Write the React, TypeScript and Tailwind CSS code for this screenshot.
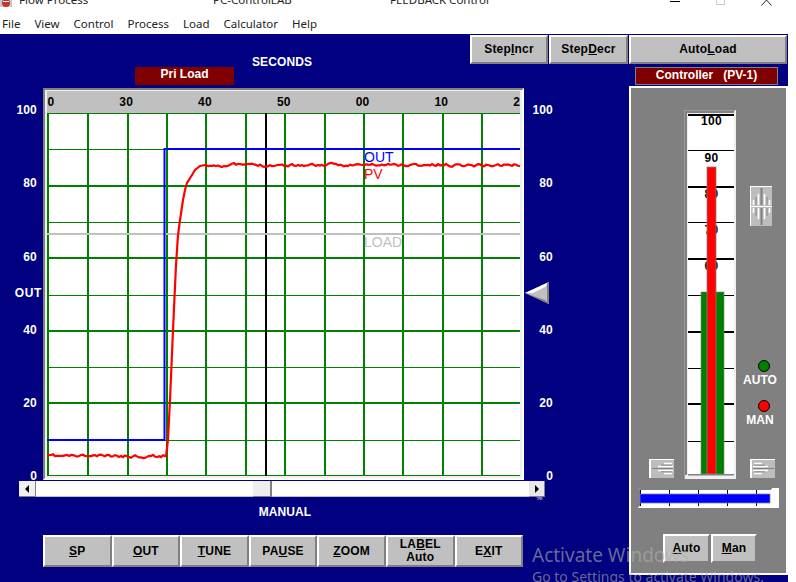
import type { ReactNode } from 'react';

const FONT = { fontFamily: '"Liberation Sans", Arial, sans-serif' };
const MAJOR_X = [48, 88, 128, 167, 206, 246, 285, 325, 364, 403, 443, 482];
const THICK_Y = [186, 258, 331, 403, 476];
const THIN_Y = [149, 222, 295, 367, 440];
const AXIS = ['100', '', '80', '', '60', 'OUT', '40', '', '20', '', '0'];
const SECONDS = ['20', '30', '40', '50', '00', '10', '20'];
const RISE = [[166, 456], [168, 440], [170, 400], [173, 330], [176, 265], [178, 235], [180, 220], [183, 200], [185, 190], [187, 183], [192, 175], [195, 170], [200, 166], [206, 165]];

// fixed noise so the trace looks the same each run
function pvPath() {
  let seed = 11;
  const rnd = () => { seed = (seed * 16807) % 2147483647; return seed / 2147483647 - 0.5; };
  let drift = 0;
  const noisy = (x: number, y: number) => {
    drift = drift * 0.55 + rnd() * 2.6;
    return `${x},${(y + drift).toFixed(1)}`;
  };
  const pts: string[] = [];
  for (let x = 47; x < 166; x += 2) pts.push(noisy(x, 456));
  RISE.forEach(([x, y]) => pts.push(`${x},${y}`));
  for (let x = 208; x <= 520; x += 2) pts.push(noisy(x, 165));
  return 'M' + pts.join('L');
}

function Btn({ children, className }: { children: ReactNode; className: string }) {
  return (
    <div className={`flex flex-col items-center justify-center bg-[#c0c0c0] border-2 border-t-white border-l-white border-r-[#808080] border-b-[#808080] text-[12px] leading-[13px] font-bold tracking-[0.2px] text-black shrink-0 ${className}`}>
      {children}
    </div>
  );
}

function AxisCol({ className, arrow }: { className: string; arrow?: boolean }) {
  return (
    <div className={`grid grid-rows-[repeat(11,36.6px)] h-[402px] mt-[4px] text-white text-[12px] font-bold tracking-[0.2px] shrink-0 ${className}`}>
      {AXIS.map((t, i) => (
        <div key={i} className="flex items-center justify-end">
          {t === 'OUT' && arrow ? (
            <svg width="29" height="24" viewBox="0 0 29 24" className="shrink-0">
              <polygon points="1,12 25,1 25,23" fill="#c0c0c0" />
              <polygon points="1,12 25,1 21,6 9,12" fill="#ffffff" />
              <polygon points="1,12 21,19 25,23" fill="#808080" />
              <polygon points="23,2 25,1 25,23 23,22" fill="#808080" />
            </svg>
          ) : t === 'OUT' ? (
            <span className="-mr-[5px] tracking-[0.6px]">OUT</span>
          ) : t}
        </div>
      ))}
    </div>
  );
}

function HandH({ flip }: { flip?: boolean }) {
  return (
    <div className="w-[25px] h-[19px] bg-[#bdbdbd] border-l-2 border-t border-white shrink-0">
      <svg width="23" height="18" viewBox="0 0 23 18" className={`block ${flip ? '-scale-x-100' : ''}`}>
        <path d="M1 8.5h21" stroke="#808080" />
        <path d="M7 6.5h15M7 10.5h15M13 3.5h8M13 13.5h8" stroke="#fff" strokeWidth="1.4" />
        <path d="M10 5.2h11M10 11.8h11" stroke="#8a8a8a" />
      </svg>
    </div>
  );
}

function HandV({ flip }: { flip?: boolean }) {
  return (
    <svg width="21" height="19" viewBox="0 0 21 19" className={`block bg-[#bdbdbd] ${flip ? '-scale-y-100' : ''}`}>
      <path d="M10.5 1v17" stroke="#808080" strokeWidth="2" />
      <path d="M7.5 7v11M13.5 7v11M2.5 13v5M18.5 13v5" stroke="#fff" strokeWidth="1.6" />
      <path d="M5 10v8M16 10v8" stroke="#8a8a8a" />
    </svg>
  );
}

function Tube() {
  return (
    <svg width="52" height="369" viewBox="684 110 52 369" className="shrink-0" style={FONT}>
      <rect x="684" y="110" width="52" height="369" fill="#f0f0f0" />
      <path d="M684.5 479V110.5H735" stroke="#9a9a9a" fill="none" />
      <path d="M686 475V112H734" stroke="#808080" strokeWidth="2" fill="none" />
      <rect x="688" y="114" width="46" height="361" fill="#fff" />
      <rect x="688" y="114" width="46" height="2" fill="#000" />
      {[['100', 125], ['90', 162], ['80', 198], ['70', 234], ['60', 270]].map(([t, y]) => (
        <text key={t} x="711.5" y={y} textAnchor="middle" fontSize="12" fontWeight="700" letterSpacing="0.3">{t}</text>
      ))}
      {[150, 186, 222, 258, 295, 331, 368, 403, 441].map((y, i) => (
        <rect key={y} x="688" y={y} width="46" height={i % 2 === 1 ? 2 : 1} fill="#000" />
      ))}
      <rect x="701" y="292" width="23" height="182" fill="#008000" stroke="#808080" strokeWidth="0.6" />
      <rect x="707" y="167" width="9" height="307" fill="#ff0000" stroke="#808080" strokeWidth="0.8" />
      <rect x="688" y="474" width="46" height="1.5" fill="#808080" />
    </svg>
  );
}

function ZoomBar() {
  return (
    <svg width="141" height="20" viewBox="638 488 141 20" className="ml-[7px] mt-[9px] shrink-0">
      <rect x="638" y="488" width="141" height="20" fill="#fff" />
      <path d="M638.5 507V488.5H772" stroke="#808080" fill="none" />
      <path d="M639.5 506V489.5H771" stroke="#808080" fill="none" />
      {[640, 669, 698, 727, 756].map(x => (
        <g key={x}>
          <rect x={x} y="490" width="1" height="4" fill="#000" />
          <rect x={x} y="503" width="1" height="3" fill="#000" />
        </g>
      ))}
      <rect x="640" y="494" width="130" height="9" fill="#0000ff" stroke="#808080" strokeWidth="0.8" />
    </svg>
  );
}

export default function App() {
  return (
    <div className="relative flex flex-col w-[796px] h-[582px] overflow-hidden bg-white" style={FONT}>
      {/* title bar, cut off by the capture */}
      <div className="relative h-[13px] shrink-0 overflow-hidden text-[11.5px] leading-[14px] text-[#222] font-['Noto_Sans',sans-serif]">
        <div className="flex -mt-[7px]">
          <svg width="14" height="14" viewBox="0 0 14 14" className="shrink-0">
            <rect x="0" y="3" width="12" height="11" fill="#c9c9c9" />
            <circle cx="6" cy="10" r="4" fill="#c8342c" />
            <rect x="3" y="8" width="6" height="1" fill="#fff" />
          </svg>
          <span className="ml-[5px] w-[194px]">Flow Process</span>
          <span className="w-[177px]">PC-ControlLAB</span>
          <span className="w-[200px]">FEEDBACK Control</span>
          <div className="ml-[80px] mt-[8px] w-[10px] h-px bg-black shrink-0" />
          <div className="ml-[36px] w-[9px] h-[12px] border border-[#ccc] shrink-0" />
          <svg width="11" height="13" viewBox="0 0 11 13" className="ml-[36px] shrink-0">
            <path d="M0.5 1.5L10.5 12.5M10.5 1.5L0.5 12.5" stroke="#222" />
          </svg>
        </div>
      </div>
      <div className="flex items-center gap-[14px] pl-[2px] h-[21px] shrink-0 text-[11.5px] text-[#222] font-['Noto_Sans',sans-serif]">
        {['File', 'View', 'Control', 'Process', 'Load', 'Calculator', 'Help'].map(m => <span key={m}>{m}</span>)}
      </div>

      <div className="flex flex-1 w-[788px] bg-[#000080] min-h-0">
        {/* left side: chart and buttons */}
        <div className="flex flex-col w-[629px] shrink-0">
          <div className="flex items-start h-[54px] shrink-0">
            <div className="ml-[135px] mt-[33px] w-[99px] h-[18px] bg-[#800000] text-white text-[12px] font-bold text-center leading-[14px]">Pri Load</div>
            <div className="ml-[18px] mt-[21px] text-white text-[12px] font-bold tracking-[0.1px] leading-[14px]">SECONDS</div>
            <div className="ml-auto mt-px mr-px flex gap-px">
              <Btn className="w-[78px] h-[29px]"><span>Step<u>I</u>ncr</span></Btn>
              <Btn className="w-[79px] h-[29px]"><span>Step<u>D</u>ecr</span></Btn>
            </div>
          </div>

          <div className="flex h-[393px] shrink-0">
            <AxisCol className="w-[37px]" />
            <div className="ml-[6px] w-[481px] h-[392px] shrink-0 border-2 border-t-[#808080] border-l-[#808080] border-r-white border-b-white bg-[#efefef] px-[2px] pt-px pb-[2px]">
              <div className="flex h-[22px] items-center overflow-hidden bg-[#c0c0c0] text-[12px] font-bold tracking-[0.2px] text-black">
                <div className="flex -ml-[39px]">
                  {SECONDS.map((s, i) => <span key={i} className="w-[78.8px] shrink-0 text-center">{s}</span>)}
                </div>
              </div>
              <div className="relative h-[363px] bg-white">
                <svg width="473" height="363" viewBox="47 113 473 363" className="block">
                  {MAJOR_X.map(x => <rect key={x} x={x - 1} y="113" width="2" height="363" fill="#008000" />)}
                  <rect x="47" y="113" width="473" height="1" fill="#008000" />
                  {THIN_Y.map(y => <rect key={y} x="47" y={y} width="473" height="1" fill="#008000" />)}
                  {THICK_Y.map(y => <rect key={y} x="47" y={y - 1} width="473" height="2" fill="#008000" />)}
                  <rect x="265" y="113" width="2" height="363" fill="#000" />
                  <rect x="47" y="233" width="473" height="2" fill="#c0c0c0" />
                  <path d="M47 440H164.5V149H520" stroke="#0000ff" strokeWidth="2" fill="none" />
                  <path d={pvPath()} stroke="#ff0000" strokeWidth="2.2" fill="none" />
                </svg>
                <span className="absolute left-[317px] top-[36px] text-[14px] leading-[16px] text-[#0000ff]">OUT</span>
                <span className="absolute left-[317px] top-[53px] text-[14px] leading-[16px] text-[#ff0000]">PV</span>
                <span className="absolute left-[317px] top-[121px] text-[14px] leading-[16px] text-[#c0c0c0]">LOAD</span>
              </div>
            </div>
            <AxisCol className="w-[29px]" arrow />
          </div>

          <div className="relative z-10 flex ml-[19px] w-[526px] h-[16px] shrink-0 bg-white">
            <div className="flex items-center justify-center w-[17px] bg-[#f0f0f0] border-b border-r border-[#808080]">
              <div className="w-0 h-0 border-y-[4px] border-y-transparent border-r-[4px] border-r-black" />
            </div>
            <div className="w-[217px] border-b border-[#c0c0c0]" />
            <div className="w-[19px] bg-[#eeeeee] border-r-2 border-b border-[#808080]" />
            <div className="flex-1 border-b border-[#c0c0c0]" />
            <div className="flex items-center justify-center w-[16px] bg-[#e8e8e8] border-b border-r border-[#808080]">
              <div className="w-0 h-0 border-y-[4px] border-y-transparent border-l-[4px] border-l-black" />
            </div>
          </div>
          <div className="relative w-[570px] h-[30px] shrink-0 flex items-center justify-center text-white text-[12px] font-bold tracking-[0.1px]">
            MANUAL
            <span className="absolute left-[536px] -top-[3px] text-[7px] leading-[8px] font-normal">%</span>
          </div>

          <div className="flex ml-[43px] mt-[8px]">
            <Btn className="w-[68.6px] h-[32px]"><span><u>S</u>P</span></Btn>
            <Btn className="w-[68.6px] h-[32px]"><span><u>O</u>UT</span></Btn>
            <Btn className="w-[68.6px] h-[32px]"><span><u>T</u>UNE</span></Btn>
            <Btn className="w-[68.6px] h-[32px]"><span>PA<u>U</u>SE</span></Btn>
            <Btn className="w-[68.6px] h-[32px]"><span><u>Z</u>OOM</span></Btn>
            <Btn className="w-[68.6px] h-[32px]"><span>LA<u>B</u>EL</span><span>Auto</span></Btn>
            <Btn className="w-[68.6px] h-[32px]"><span>E<u>X</u>IT</span></Btn>
          </div>
        </div>

        {/* right side: controller faceplate */}
        <div className="flex flex-col flex-1 min-w-0">
          <Btn className="w-[158px] h-[29px] mt-px"><span>Auto<u>L</u>oad</span></Btn>
          <div className="ml-[6px] mt-[3px] w-[143px] h-[18px] shrink-0 bg-[#800000] border border-[#808080] text-white text-[12px] font-bold text-center leading-[14px] whitespace-pre">Controller   (PV-1)</div>
          <div className="flex flex-col w-[159px] h-[489px] mt-px shrink-0 border-2 border-white bg-[#808080]">
            <div className="flex h-[369px] mt-[22px] shrink-0">
              <div className="flex flex-col justify-end w-[53px] pl-[18px] pb-px shrink-0"><HandH /></div>
              <Tube />
              <div className="flex flex-col items-start pl-[14px] flex-1 pb-px">
                <div className="flex flex-col gap-px mt-[76px] w-[22px] bg-white border-l border-t border-white shrink-0">
                  <HandV />
                  <HandV flip />
                </div>
                <div className="flex flex-col items-center w-[36px] -ml-[8px] mt-[134px] text-white text-[12px] font-bold leading-[14px]">
                  <div className="w-[12px] h-[12px] ml-[7px] rounded-full bg-[#008000] border border-black" />
                  <span className="mt-px">AUTO</span>
                  <div className="w-[12px] h-[12px] ml-[7px] rounded-full bg-[#ff0000] border border-black mt-[13px]" />
                  <span className="mt-px">MAN</span>
                </div>
                <div className="mt-auto"><HandH flip /></div>
              </div>
            </div>
            <ZoomBar />
            <div className="flex gap-px ml-[32px] mt-[26px]">
              <Btn className="w-[47px] h-[29px]"><span><u>A</u>uto</span></Btn>
              <Btn className="w-[46px] h-[29px]"><span><u>M</u>an</span></Btn>
            </div>
          </div>
        </div>
      </div>

      {/* windows watermark */}
      <div className="absolute left-[532px] top-[543px] whitespace-nowrap text-[#b0b0a8]/60 font-['Noto_Sans',sans-serif]">
        <div className="text-[19px] leading-[24px]">Activate Windows</div>
        <div className="text-[14px] leading-[20px]">Go to Settings to activate Windows.</div>
      </div>
    </div>
  );
}
